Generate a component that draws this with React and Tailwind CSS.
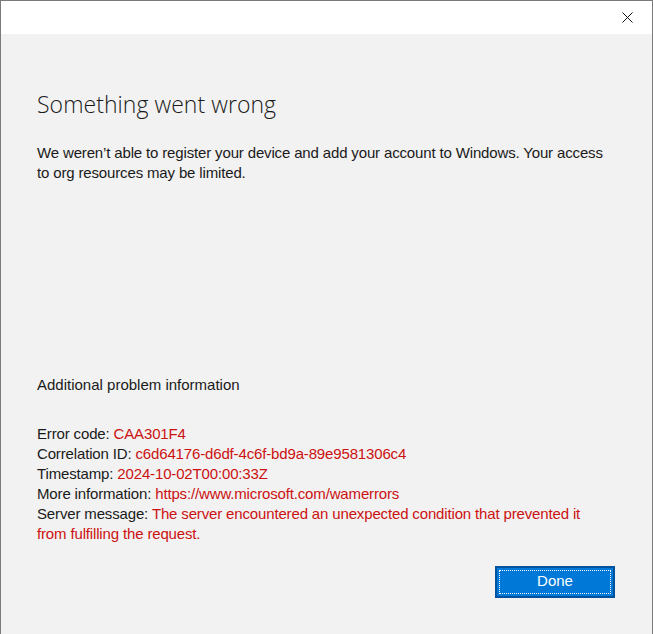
import React from "react";

const font = { fontFamily: '"Liberation Sans", Arial, sans-serif' };
const titleFont = { fontFamily: '"Open Sans", "Liberation Sans", Arial, sans-serif' };

function Row({ label, value }) {
  return (
    <div>
      {label} <span className="text-[#cc1111]">{value}</span>
    </div>
  );
}

export default function App() {
  return (
    <div
      className="w-[653px] h-[634px] flex flex-col border-x border-t border-[#7a7a7a] bg-[#f2f2f2] text-[#1a1a1a]"
      style={font}
    >
      <div className="h-[33px] bg-white flex justify-end items-center shrink-0">
        <button className="w-[46px] h-[33px] flex items-center justify-center mr-[2px]">
          <svg width="11" height="11" viewBox="0 0 11 11" fill="none">
            <path d="M0.5 0.5L10.5 10.5M10.5 0.5L0.5 10.5" stroke="#111" strokeWidth="1" />
          </svg>
        </button>
      </div>

      <div className="flex-1 flex flex-col px-[36px] tracking-[-0.15px]">
        <h1
          className="mt-[54px] text-[23px] leading-[32px] font-light tracking-[0.05px] text-[#1a1a1a]"
          style={titleFont}
        >
          Something went wrong
        </h1>
        <p className="mt-[23px] text-[15px] leading-[20px] whitespace-nowrap">
          We weren’t able to register your device and add your account to Windows. Your access
          <br />
          to org resources may be limited.
        </p>

        <div className="mt-[192px] text-[15px] leading-[20px] tracking-normal">
          Additional problem information
        </div>

        <div className="mt-[29px] text-[15px] leading-[20px]">
          <Row label="Error code:" value="CAA301F4" />
          <Row label="Correlation ID:" value="c6d64176-d6df-4c6f-bd9a-89e9581306c4" />
          <Row label="Timestamp:" value="2024-10-02T00:00:33Z" />
          <Row label="More information:" value="https://www.microsoft.com/wamerrors" />
          <div className="whitespace-nowrap">
            Server message:{" "}
            <span className="text-[#cc1111]">
              The server encountered an unexpected condition that prevented it
              <br />
              from fulfilling the request.
            </span>
          </div>
        </div>

        <div className="mt-[22px] flex justify-end pr-[1px]">
          <button className="relative w-[120px] h-[32px] pb-[3px] bg-[#0078d7] border-2 border-[#00529c] text-white text-[15px] leading-none tracking-normal">
            <span className="absolute inset-[2px] border border-dotted border-white" />
            Done
          </button>
        </div>
      </div>
    </div>
  );
}
